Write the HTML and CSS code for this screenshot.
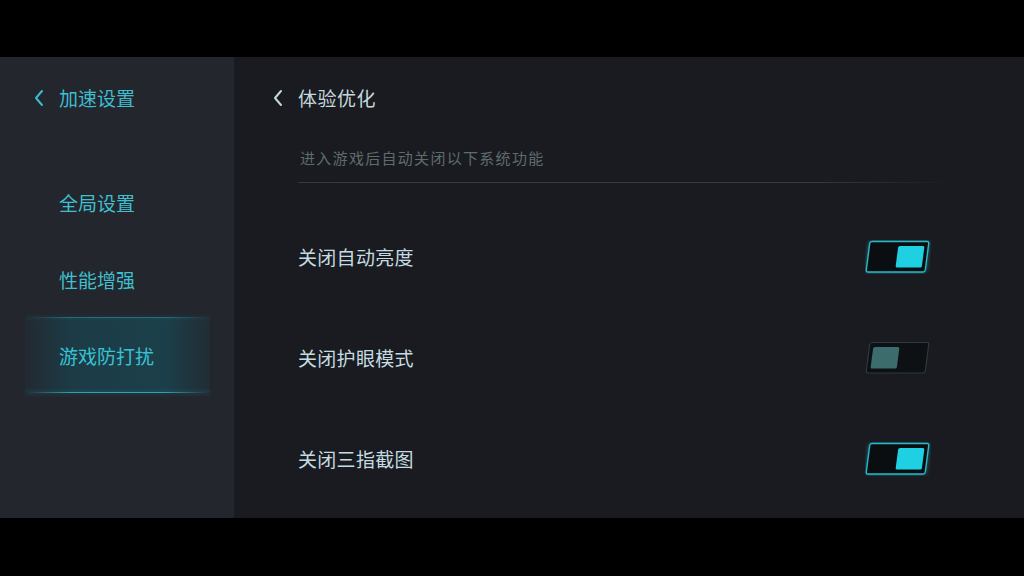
FILE: index.html
```html
<!DOCTYPE html>
<html lang="zh">
<head>
<meta charset="utf-8">
<link rel="stylesheet" href="styles.css">
</head>
<body>
<div class="screen">
  <div class="bar"></div>
  <div class="main">
    <aside class="sidebar">
      <div class="side-head">
        <svg class="chev" width="12" height="18" viewBox="0 0 12 18"><path d="M9 2 L3 9 L9 16" fill="none" stroke="#3cbccd" stroke-width="2" stroke-linecap="round" stroke-linejoin="round"/></svg>
        <span>加速设置</span>
      </div>
      <div class="side-item">全局设置</div>
      <div class="side-item">性能增强</div>
      <div class="side-item active">游戏防打扰</div>
    </aside>
    <section class="content">
      <div class="title">
        <svg class="chev" width="12" height="18" viewBox="0 0 12 18"><path d="M9 2 L3 9 L9 16" fill="none" stroke="#c3d8db" stroke-width="2" stroke-linecap="round" stroke-linejoin="round"/></svg>
        <span>体验优化</span>
      </div>
      <div class="subtitle">进入游戏后自动关闭以下系统功能</div>
      <div class="divider"></div>
      <div class="row">
        <span>关闭自动亮度</span>
        <svg class="toggle" width="66" height="34" viewBox="0 0 66 34">
          <path d="M7 1.5 H62 Q64 1.5 63.7 3.5 L60.3 30 Q60 32 58 32 H3 Q1 32 1.3 30 L4.7 3.5 Q5 1.5 7 1.5 Z" fill="#0b0e11" stroke="#2ab8c8" stroke-width="1.4" class="glow"/>
          <path d="M35 6 H58 Q59.5 6 59.3 7.5 L56.9 26 Q56.7 27.5 55.2 27.5 H32 Q30.5 27.5 30.7 26 L33.1 7.5 Q33.3 6 35 6 Z" fill="#1fd0e2"/>
        </svg>
      </div>
      <div class="row">
        <span>关闭护眼模式</span>
        <svg class="toggle" width="66" height="34" viewBox="0 0 66 34">
          <path d="M7 1.5 H62 Q64 1.5 63.7 3.5 L60.3 30 Q60 32 58 32 H3 Q1 32 1.3 30 L4.7 3.5 Q5 1.5 7 1.5 Z" fill="#0e1114" stroke="#2a3a40" stroke-width="1.2"/>
          <path d="M10 6 H33 Q34.5 6 34.3 7.5 L31.9 26 Q31.7 27.5 30.2 27.5 H7 Q5.5 27.5 5.7 26 L8.1 7.5 Q8.3 6 10 6 Z" fill="#3c6c6b"/>
        </svg>
      </div>
      <div class="row">
        <span>关闭三指截图</span>
        <svg class="toggle" width="66" height="34" viewBox="0 0 66 34">
          <path d="M7 1.5 H62 Q64 1.5 63.7 3.5 L60.3 30 Q60 32 58 32 H3 Q1 32 1.3 30 L4.7 3.5 Q5 1.5 7 1.5 Z" fill="#0b0e11" stroke="#2ab8c8" stroke-width="1.4" class="glow"/>
          <path d="M35 6 H58 Q59.5 6 59.3 7.5 L56.9 26 Q56.7 27.5 55.2 27.5 H32 Q30.5 27.5 30.7 26 L33.1 7.5 Q33.3 6 35 6 Z" fill="#1fd0e2"/>
        </svg>
      </div>
    </section>
  </div>
  <div class="bar bottom"></div>
</div>
</body>
</html>
```
FILE: styles.css
```css
html, body {
  margin: 0;
  padding: 0;
  background: #000;
}
body {
  width: 1024px;
  height: 576px;
  overflow: hidden;
  font-family: "Noto Sans CJK SC", "Noto Sans", sans-serif;
}
.screen {
  display: flex;
  flex-direction: column;
  height: 576px;
}
.bar {
  height: 57px;
  background: #000;
  flex: none;
}
.bar.bottom {
  height: 58px;
}
.main {
  height: 461px;
  display: flex;
  flex: none;
}
.sidebar {
  width: 234px;
  flex: none;
  background: #24262d;
  display: flex;
  flex-direction: column;
}
.side-head {
  height: 107px;
  box-sizing: border-box;
  padding-top: 28px;
  padding-left: 33px;
  display: flex;
  align-items: flex-start;
  gap: 14px;
  font-size: 19px;
  line-height: 26px;
  color: #3dbdcd;
}
.chev {
  margin-top: 4px;
  flex: none;
}
.side-item {
  height: 76px;
  margin-left: 25px;
  width: 185px;
  box-sizing: border-box;
  padding-left: 34px;
  display: flex;
  align-items: center;
  font-size: 19px;
  color: #3fbfcf;
  position: relative;
}
.side-item:nth-child(3) {
  margin-top: 1px;
}
.side-item.active {
  background: linear-gradient(90deg, rgba(18, 70, 82, 0.1) 0%, rgba(20, 80, 94, 0.5) 25%, rgba(20, 84, 98, 0.55) 75%, rgba(20, 80, 94, 0.15) 100%);
  color: #38c2d2;
}
.side-item.active::before,
.side-item.active::after {
  content: "";
  position: absolute;
  left: 0;
  right: 0;
  height: 1px;
  background: linear-gradient(90deg, rgba(45, 190, 205, 0) 0%, rgba(45, 190, 205, 0.8) 25%, rgba(45, 190, 205, 0.8) 75%, rgba(45, 190, 205, 0) 100%);
  box-shadow: 0 0 4px rgba(40, 190, 205, 0.5);
}
.side-item.active::before {
  top: 0;
  opacity: 0.5;
}
.side-item.active::after {
  bottom: 0;
}
.content {
  flex: 1;
  background: #1a1b20;
  box-sizing: border-box;
  padding-top: 28px;
  padding-left: 38px;
}
.content .title {
  display: flex;
  align-items: flex-start;
  gap: 14px;
  font-size: 19px;
  line-height: 26px;
  color: #c3d8db;
  letter-spacing: 0.5px;
}
.subtitle {
  margin-top: 37px;
  margin-left: 28px;
  font-size: 15px;
  line-height: 20px;
  letter-spacing: 1.3px;
  color: #5e6c70;
}
.divider {
  margin-top: 14px;
  margin-left: 26px;
  width: 654px;
  height: 1px;
  background: linear-gradient(90deg, #35373d 0%, #36383e 80%, rgba(54, 56, 62, 0) 100%);
}
.divider + .row {
  margin-top: 23px;
}
.row {
  height: 101px;
  margin-left: 26px;
  width: 654px;
  box-sizing: border-box;
  padding-right: 21px;
  display: flex;
  align-items: center;
  justify-content: space-between;
  font-size: 19px;
  letter-spacing: 0.3px;
  color: #c5dde0;
}
.toggle {
  display: block;
  flex: none;
}
.glow {
  filter: drop-shadow(0 0 2px rgba(40, 200, 215, 0.5));
}
```
